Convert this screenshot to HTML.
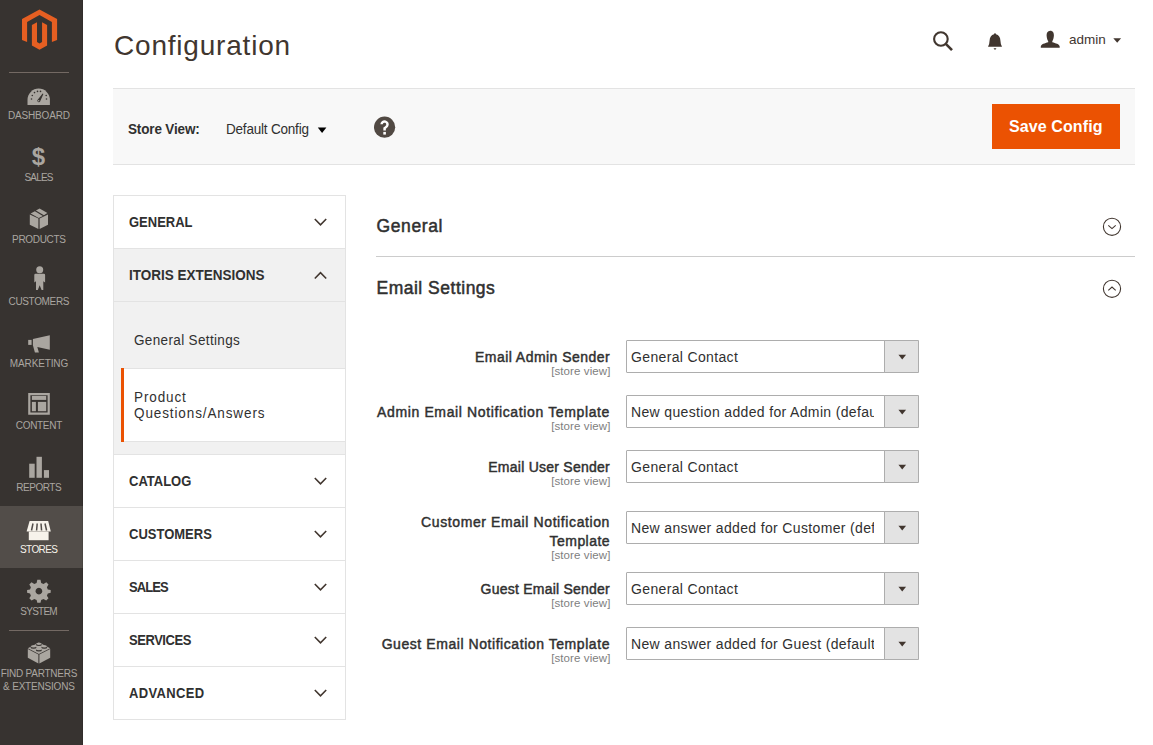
<!DOCTYPE html>
<html><head><meta charset="utf-8"><title>Configuration</title>
<style>html,body{margin:0;padding:0;background:#fff;width:1153px;height:745px;overflow:hidden;position:relative;font-family:"Liberation Sans",sans-serif}</style>
</head><body>
<div style="position:absolute;left:0px;top:0px;width:83px;height:745px;background:#373330"></div><div style="position:absolute;left:0px;top:506px;width:83px;height:62px;background:#524d49"></div><div style="position:absolute;left:82px;top:0px;width:1px;height:745px;background:rgba(0,0,0,0.1)"></div><svg style="position:absolute;left:0;top:0" width="83" height="60" viewBox="0 0 83 60">
<path fill="#e65f22" d="M39.5,9.4 L57.1,19.1 L57.1,39.9 L51.9,41.9 L51.9,22.1 L39.5,15.1 L27.1,22.1 L27.1,41.9 L22,39.9 L22,19.1 Z"/>
<path fill="#e65f22" d="M31.9,25.1 L37,22.3 L37,42.1 L39.5,43.6 L42.05,42.1 L42.05,22.3 L47.1,25.1 L47.1,45.6 L39.5,49.8 L31.9,45.6 Z"/>
</svg><div style="position:absolute;left:9px;top:72px;width:60px;height:1px;background:#736963"></div><div style="position:absolute;left:9px;top:630px;width:60px;height:1px;background:#736963"></div><svg style="position:absolute;left:0;top:0" width="83" height="745" viewBox="0 0 83 745">
<!-- dashboard -->
<path fill="#aaa6a0" d="M27.5,104.9 L27.5,99.8 A11.2,11.2 0 0 1 49.9,99.8 L49.9,104.9 Z"/>
<g fill="#373330"><circle cx="31.5" cy="99" r="0.8"/><circle cx="32.3" cy="95.5" r="0.8"/><circle cx="34.5" cy="92.6" r="0.8"/><circle cx="37.5" cy="91.4" r="0.8"/><circle cx="40.5" cy="91.4" r="0.8"/><circle cx="46.2" cy="95.5" r="0.8"/><circle cx="46.5" cy="99" r="0.8"/></g>
<path fill="#373330" d="M37.3,100.3 L42.6,93.6 L43.4,94.1 L40.1,101.6 A1.6,1.6 0 0 1 37.3,100.3 Z"/>
<circle cx="38.7" cy="100.8" r="0.7" fill="#aaa6a0"/>
<!-- products -->
<path fill="#aaa6a0" d="M29.8,214.5 L38.4,218.6 L38.4,229 L29.8,224.7 Z"/>
<path fill="#aaa6a0" d="M39.6,218.6 L48,214.5 L48,224.7 L39.6,229 Z"/>
<path fill="#aaa6a0" d="M30.6,213.5 L34.9,211.2 L42.9,215.9 L38.7,217.9 Z"/>
<path fill="#aaa6a0" d="M35.9,210.5 L39.6,208.6 L47.4,213.1 L43.9,215.2 Z"/>
<!-- customers -->
<circle cx="39.7" cy="269.7" r="3.5" fill="#aaa6a0"/>
<path fill="#aaa6a0" d="M34.3,275 Q34.3,273.8 35.5,273.8 L43.9,273.8 Q45.1,273.8 45.1,275 L45.1,282.6 L43.3,281.2 L43.3,289.9 L41.6,289.9 L39.7,285.2 L37.8,289.9 L36,289.9 L36,281.2 L34.3,282.6 Z"/>
<!-- marketing -->
<rect x="28.2" y="339.9" width="3.4" height="5" fill="#aaa6a0"/>
<path fill="#aaa6a0" d="M32.9,338.9 L49.8,335.2 L49.8,349.7 L37.3,346.9 L38.9,352.4 L34.9,352.6 L32.9,345.2 Z"/>
<!-- content -->
<path fill="#aaa6a0" fill-rule="evenodd" d="M28.2,393 H49.8 V414.8 H28.2 Z M30.4,395.2 V412.6 H47.6 V395.2 Z"/>
<rect x="31.9" y="395.9" width="14.3" height="4" fill="#aaa6a0"/>
<rect x="31.9" y="401.9" width="4" height="9.3" fill="#aaa6a0"/>
<rect x="37.9" y="401.9" width="8.3" height="9.3" fill="#aaa6a0"/>
<!-- reports -->
<rect x="29.2" y="463.7" width="5.5" height="14.1" fill="#aaa6a0"/>
<rect x="36.5" y="456.8" width="5.4" height="21" fill="#aaa6a0"/>
<rect x="43.9" y="470.1" width="5.1" height="7.7" fill="#aaa6a0"/>
<!-- stores -->
<path fill="#f7f3eb" d="M29.6,521 H48.2 L50.8,531.6 H26.6 Z"/>
<g stroke="#524d49" stroke-width="1.5"><line x1="33" y1="523.5" x2="31.5" y2="530.5"/><line x1="37.2" y1="523.5" x2="36.6" y2="530.5"/><line x1="41" y1="523.5" x2="41.6" y2="530.5"/><line x1="45" y1="523.5" x2="46.6" y2="530.5"/></g>
<rect x="28.8" y="531.6" width="19.8" height="8.6" fill="#f7f3eb"/>
<!-- system gear -->
<g transform="translate(38.9,591.1)" fill="#aaa6a0">
<path fill-rule="evenodd" d="M-1.6,-11.3 L1.6,-11.3 L2.3,-8.2 L4.6,-7.2 L7.4,-8.9 L9.6,-6.6 L8.0,-3.9 L8.9,-1.6 L11.8,-1 L11.8,1.6 L8.9,2.3 L8.0,4.6 L9.6,7.2 L7.3,9.5 L4.6,7.9 L2.3,8.9 L1.6,11.6 L-1.6,11.6 L-2.3,8.9 L-4.6,7.9 L-7.3,9.5 L-9.6,7.2 L-8.0,4.6 L-8.9,2.3 L-11.8,1.6 L-11.8,-1 L-8.9,-1.6 L-8.0,-3.9 L-9.6,-6.6 L-7.4,-8.9 L-4.6,-7.2 L-2.3,-8.2 Z M0,-3.4 A3.4,3.4 0 1 0 0.01,-3.4 Z"/>
</g>
<!-- lego --><g transform="translate(0,-0.8)">
<path fill="#aaa6a0" d="M27.8,649.1 L38.9,654.7 L50.2,649.1 L38.9,643.3 Z"/>
<path fill="#aaa6a0" d="M27.8,649.8 L38.4,655.2 L38.4,664.2 L27.8,658.5 Z"/>
<path fill="#aaa6a0" d="M39.4,655.2 L50.2,649.8 L50.2,658.5 L39.4,664.2 Z"/>
<g fill="#373330"><ellipse cx="38.9" cy="645.6" rx="3" ry="1.3"/><ellipse cx="33.5" cy="648.2" rx="3" ry="1.3"/><ellipse cx="44.3" cy="648.2" rx="3" ry="1.3"/><ellipse cx="38.9" cy="651" rx="3" ry="1.3"/></g>
<g fill="#aaa6a0"><ellipse cx="38.9" cy="644.6" rx="2.6" ry="1.1"/><ellipse cx="33.5" cy="647.2" rx="2.6" ry="1.1"/><ellipse cx="44.3" cy="647.2" rx="2.6" ry="1.1"/><ellipse cx="38.9" cy="650" rx="2.6" ry="1.1"/></g>
</g></svg><svg style="position:absolute;left:900px;top:20px" width="253" height="40" viewBox="900 20 253 40">
<circle cx="940.9" cy="39" r="6.8" fill="none" stroke="#41362f" stroke-width="2.1"/>
<line x1="945.8" y1="43.9" x2="952" y2="50.1" stroke="#41362f" stroke-width="2.6"/>
<path fill="#41362f" d="M995,33.2 Q996,33.2 996,34.3 Q1000.2,35.5 1000.4,40.5 Q1000.6,45 1002,46.7 H988 Q989.4,45 989.6,40.5 Q989.8,35.5 994,34.3 Q994,33.2 995,33.2 Z"/>
<path fill="#41362f" d="M993.5,48.2 H996.5 L995,50 Z"/>
<path fill="#41362f" d="M1050.2,30.8 C1047.5,30.8 1046.5,33 1046.6,35.5 C1046.7,38 1047.5,40.3 1048.2,41.2 L1048.2,42.2 C1045,43.2 1041,44 1040.8,46.5 L1040.8,47.7 L1059.7,47.7 L1059.7,46.5 C1059.5,44 1055.5,43.2 1052.3,42.2 L1052.3,41.2 C1053,40.3 1053.8,38 1053.9,35.5 C1054,33 1053,30.8 1050.2,30.8 Z"/>
<path fill="#41362f" d="M1113.3,38.2 H1121.1 L1117.2,42.7 Z"/>
</svg><div style="position:absolute;left:113px;top:88px;width:1022px;height:77px;background:#f8f8f8;border-top:1px solid #e3e3e3;border-bottom:1px solid #e3e3e3;box-sizing:border-box"></div><svg style="position:absolute;left:310px;top:110px" width="90" height="35" viewBox="310 110 90 35">
<path fill="#000" d="M317.8,127.6 H326.4 L322.1,133.1 Z"/>
<circle cx="384.6" cy="127.2" r="10.6" fill="#514943"/>
<path d="M381.6,124.3 A2.95,2.95 0 1 1 387.1,125.9 Q386.4,127 384.6,128.2 L384.6,130.6" fill="none" stroke="#fff" stroke-width="2.5"/>
<rect x="383.3" y="131.9" width="2.6" height="2.7" fill="#fff"/>
</svg><div style="position:absolute;left:992px;top:104px;width:128px;height:45px;background:#eb5202"></div><div style="position:absolute;left:113px;top:195px;width:233px;height:525px;background:#fff;border:1px solid #e3e3e3;box-sizing:border-box"></div><div style="position:absolute;left:114px;top:248px;width:231px;height:1px;background:#e3e3e3"></div><div style="position:absolute;left:114px;top:249px;width:231px;height:206px;background:#f1f1f1"></div><div style="position:absolute;left:114px;top:301px;width:231px;height:1px;background:#e3e3e3"></div><div style="position:absolute;left:121px;top:368px;width:224px;height:74px;background:#fff;border-top:1px solid #e3e3e3;border-bottom:1px solid #e3e3e3;box-sizing:border-box"></div><div style="position:absolute;left:121px;top:368px;width:3px;height:74px;background:#eb5202"></div><div style="position:absolute;left:114px;top:454px;width:231px;height:1px;background:#e3e3e3"></div><div style="position:absolute;left:114px;top:507px;width:231px;height:1px;background:#e3e3e3"></div><div style="position:absolute;left:114px;top:560px;width:231px;height:1px;background:#e3e3e3"></div><div style="position:absolute;left:114px;top:613px;width:231px;height:1px;background:#e3e3e3"></div><div style="position:absolute;left:114px;top:666px;width:231px;height:1px;background:#e3e3e3"></div><svg style="position:absolute;left:300px;top:190px" width="40" height="520" viewBox="300 190 40 520"><path d="M314.8,219 L320.5,224.8 L326.2,219" fill="none" stroke="#41362f" stroke-width="1.6"/><path d="M314.8,278.5 L320.5,272.7 L326.2,278.5" fill="none" stroke="#41362f" stroke-width="1.6"/><path d="M314.8,478 L320.5,483.8 L326.2,478" fill="none" stroke="#41362f" stroke-width="1.6"/><path d="M314.8,531 L320.5,536.8 L326.2,531" fill="none" stroke="#41362f" stroke-width="1.6"/><path d="M314.8,584 L320.5,589.8 L326.2,584" fill="none" stroke="#41362f" stroke-width="1.6"/><path d="M314.8,637 L320.5,642.8 L326.2,637" fill="none" stroke="#41362f" stroke-width="1.6"/><path d="M314.8,690 L320.5,695.8 L326.2,690" fill="none" stroke="#41362f" stroke-width="1.6"/></svg><div style="position:absolute;left:376px;top:256px;width:759px;height:1px;background:#cccccc"></div><svg style="position:absolute;left:1095px;top:210px" width="35" height="95" viewBox="1095 210 35 95">
<circle cx="1112" cy="226.8" r="8.6" fill="none" stroke="#41362f" stroke-width="1.1"/>
<path d="M1108.3,225.3 L1112,228.6 L1115.7,225.3" fill="none" stroke="#41362f" stroke-width="1.1"/>
<circle cx="1112" cy="288.8" r="8.6" fill="none" stroke="#41362f" stroke-width="1.1"/>
<path d="M1108.3,290.3 L1112,287 L1115.7,290.3" fill="none" stroke="#41362f" stroke-width="1.1"/>
</svg><div style="position:absolute;left:626px;top:340px;width:293px;height:33px;background:#fff;border:1px solid #adadad;border-radius:1px;box-sizing:border-box"></div><div style="position:absolute;left:884px;top:340px;width:35px;height:33px;background:#e3e3e3;border:1px solid #adadad;border-radius:0 1px 1px 0;box-sizing:border-box"></div><svg style="position:absolute;left:895px;top:350px" width="14" height="12" viewBox="0 0 14 12"><path d="M3.4,4.7 H11.1 L7.25,9.6 Z" fill="#41362f"/></svg><div style="position:absolute;left:631px;top:341px;width:243px;height:31px;overflow:hidden"><div style="position:absolute;left:0;top:8.90px;white-space:nowrap;font-family:'Liberation Sans',sans-serif;font-size:14px;line-height:14px;color:#303030;letter-spacing:0.35px">General Contact</div></div><div style="position:absolute;left:626px;top:395px;width:293px;height:33px;background:#fff;border:1px solid #adadad;border-radius:1px;box-sizing:border-box"></div><div style="position:absolute;left:884px;top:395px;width:35px;height:33px;background:#e3e3e3;border:1px solid #adadad;border-radius:0 1px 1px 0;box-sizing:border-box"></div><svg style="position:absolute;left:895px;top:405px" width="14" height="12" viewBox="0 0 14 12"><path d="M3.4,4.7 H11.1 L7.25,9.6 Z" fill="#41362f"/></svg><div style="position:absolute;left:631px;top:396px;width:243px;height:31px;overflow:hidden"><div style="position:absolute;left:0;top:8.90px;white-space:nowrap;font-family:'Liberation Sans',sans-serif;font-size:14px;line-height:14px;color:#303030;letter-spacing:0.35px">New question added for Admin (default)</div></div><div style="position:absolute;left:626px;top:450px;width:293px;height:33px;background:#fff;border:1px solid #adadad;border-radius:1px;box-sizing:border-box"></div><div style="position:absolute;left:884px;top:450px;width:35px;height:33px;background:#e3e3e3;border:1px solid #adadad;border-radius:0 1px 1px 0;box-sizing:border-box"></div><svg style="position:absolute;left:895px;top:460px" width="14" height="12" viewBox="0 0 14 12"><path d="M3.4,4.7 H11.1 L7.25,9.6 Z" fill="#41362f"/></svg><div style="position:absolute;left:631px;top:451px;width:243px;height:31px;overflow:hidden"><div style="position:absolute;left:0;top:8.90px;white-space:nowrap;font-family:'Liberation Sans',sans-serif;font-size:14px;line-height:14px;color:#303030;letter-spacing:0.35px">General Contact</div></div><div style="position:absolute;left:626px;top:511px;width:293px;height:33px;background:#fff;border:1px solid #adadad;border-radius:1px;box-sizing:border-box"></div><div style="position:absolute;left:884px;top:511px;width:35px;height:33px;background:#e3e3e3;border:1px solid #adadad;border-radius:0 1px 1px 0;box-sizing:border-box"></div><svg style="position:absolute;left:895px;top:521px" width="14" height="12" viewBox="0 0 14 12"><path d="M3.4,4.7 H11.1 L7.25,9.6 Z" fill="#41362f"/></svg><div style="position:absolute;left:631px;top:512px;width:243px;height:31px;overflow:hidden"><div style="position:absolute;left:0;top:8.90px;white-space:nowrap;font-family:'Liberation Sans',sans-serif;font-size:14px;line-height:14px;color:#303030;letter-spacing:0.35px">New answer added for Customer (default)</div></div><div style="position:absolute;left:626px;top:572px;width:293px;height:33px;background:#fff;border:1px solid #adadad;border-radius:1px;box-sizing:border-box"></div><div style="position:absolute;left:884px;top:572px;width:35px;height:33px;background:#e3e3e3;border:1px solid #adadad;border-radius:0 1px 1px 0;box-sizing:border-box"></div><svg style="position:absolute;left:895px;top:582px" width="14" height="12" viewBox="0 0 14 12"><path d="M3.4,4.7 H11.1 L7.25,9.6 Z" fill="#41362f"/></svg><div style="position:absolute;left:631px;top:573px;width:243px;height:31px;overflow:hidden"><div style="position:absolute;left:0;top:8.90px;white-space:nowrap;font-family:'Liberation Sans',sans-serif;font-size:14px;line-height:14px;color:#303030;letter-spacing:0.35px">General Contact</div></div><div style="position:absolute;left:626px;top:627px;width:293px;height:33px;background:#fff;border:1px solid #adadad;border-radius:1px;box-sizing:border-box"></div><div style="position:absolute;left:884px;top:627px;width:35px;height:33px;background:#e3e3e3;border:1px solid #adadad;border-radius:0 1px 1px 0;box-sizing:border-box"></div><svg style="position:absolute;left:895px;top:637px" width="14" height="12" viewBox="0 0 14 12"><path d="M3.4,4.7 H11.1 L7.25,9.6 Z" fill="#41362f"/></svg><div style="position:absolute;left:631px;top:628px;width:243px;height:31px;overflow:hidden"><div style="position:absolute;left:0;top:8.90px;white-space:nowrap;font-family:'Liberation Sans',sans-serif;font-size:14px;line-height:14px;color:#303030;letter-spacing:0.35px">New answer added for Guest (default)</div></div>
<div style="position:absolute;top:110.70px;white-space:nowrap;font-family:'Liberation Sans',sans-serif;font-size:10px;line-height:10px;font-weight:400;color:#aaa6a0;letter-spacing:-0.18px;;left:-61.09px;width:200px;text-align:center">DASHBOARD</div><div style="position:absolute;top:172.70px;white-space:nowrap;font-family:'Liberation Sans',sans-serif;font-size:10px;line-height:10px;font-weight:400;color:#aaa6a0;letter-spacing:-0.8px;;left:-61.4px;width:200px;text-align:center">SALES</div><div style="position:absolute;top:234.70px;white-space:nowrap;font-family:'Liberation Sans',sans-serif;font-size:10px;line-height:10px;font-weight:400;color:#aaa6a0;letter-spacing:-0.33px;;left:-61.165px;width:200px;text-align:center">PRODUCTS</div><div style="position:absolute;top:296.70px;white-space:nowrap;font-family:'Liberation Sans',sans-serif;font-size:10px;line-height:10px;font-weight:400;color:#aaa6a0;letter-spacing:-0.36px;;left:-61.18px;width:200px;text-align:center">CUSTOMERS</div><div style="position:absolute;top:358.70px;white-space:nowrap;font-family:'Liberation Sans',sans-serif;font-size:10px;line-height:10px;font-weight:400;color:#aaa6a0;letter-spacing:-0.14px;;left:-61.07px;width:200px;text-align:center">MARKETING</div><div style="position:absolute;top:420.70px;white-space:nowrap;font-family:'Liberation Sans',sans-serif;font-size:10px;line-height:10px;font-weight:400;color:#aaa6a0;letter-spacing:-0.3px;;left:-61.15px;width:200px;text-align:center">CONTENT</div><div style="position:absolute;top:482.70px;white-space:nowrap;font-family:'Liberation Sans',sans-serif;font-size:10px;line-height:10px;font-weight:400;color:#aaa6a0;letter-spacing:-0.47px;;left:-61.235px;width:200px;text-align:center">REPORTS</div><div style="position:absolute;top:544.70px;white-space:nowrap;font-family:'Liberation Sans',sans-serif;font-size:10px;line-height:10px;font-weight:400;color:#f7f3eb;letter-spacing:-0.6px;;left:-61.3px;width:200px;text-align:center">STORES</div><div style="position:absolute;top:606.70px;white-space:nowrap;font-family:'Liberation Sans',sans-serif;font-size:10px;line-height:10px;font-weight:400;color:#aaa6a0;letter-spacing:-0.76px;;left:-61.38px;width:200px;text-align:center">SYSTEM</div><div style="position:absolute;top:668.70px;white-space:nowrap;font-family:'Liberation Sans',sans-serif;font-size:10px;line-height:10px;font-weight:400;color:#aaa6a0;letter-spacing:-0.24px;;left:-61.12px;width:200px;text-align:center">FIND PARTNERS</div><div style="position:absolute;top:682.00px;white-space:nowrap;font-family:'Liberation Sans',sans-serif;font-size:10px;line-height:10px;font-weight:400;color:#aaa6a0;letter-spacing:-0.19px;;left:-61.1px;width:200px;text-align:center">&amp; EXTENSIONS</div><div style="position:absolute;top:144.50px;white-space:nowrap;font-family:'Liberation Sans',sans-serif;font-size:24px;line-height:24px;font-weight:700;color:#aaa6a0;letter-spacing:0px;;left:-61.6px;width:200px;text-align:center">$</div><div style="position:absolute;top:31.50px;white-space:nowrap;font-family:'Liberation Sans',sans-serif;font-size:28px;line-height:28px;font-weight:400;color:#41362f;letter-spacing:0.8px;;left:114px">Configuration</div><div style="position:absolute;top:32.80px;white-space:nowrap;font-family:'Liberation Sans',sans-serif;font-size:13.5px;line-height:13.5px;font-weight:400;color:#41362f;letter-spacing:0px;;left:1069px">admin</div><div style="position:absolute;top:123.30px;white-space:nowrap;font-family:'Liberation Sans',sans-serif;font-size:13.5px;line-height:13.5px;font-weight:700;color:#303030;letter-spacing:-0.15px;transform:scaleY(1.08);transform-origin:0 11px;left:128px">Store View:</div><div style="position:absolute;top:123.30px;white-space:nowrap;font-family:'Liberation Sans',sans-serif;font-size:13.5px;line-height:13.5px;font-weight:400;color:#303030;letter-spacing:-0.2px;transform:scaleY(1.08);transform-origin:0 11px;left:226px">Default Config</div><div style="position:absolute;top:119.20px;white-space:nowrap;font-family:'Liberation Sans',sans-serif;font-size:16px;line-height:16px;font-weight:700;color:#ffffff;letter-spacing:0.1px;;left:1009px">Save Config</div><div style="position:absolute;top:215.70px;white-space:nowrap;font-family:'Liberation Sans',sans-serif;font-size:13px;line-height:13px;font-weight:700;color:#303030;letter-spacing:0px;transform:scaleY(1.1);transform-origin:0 11px;left:129px">GENERAL</div><div style="position:absolute;top:268.70px;white-space:nowrap;font-family:'Liberation Sans',sans-serif;font-size:13.5px;line-height:13.5px;font-weight:700;color:#303030;letter-spacing:0px;transform:scaleY(1.1);transform-origin:0 11px;left:129px">ITORIS EXTENSIONS</div><div style="position:absolute;top:333.80px;white-space:nowrap;font-family:'Liberation Sans',sans-serif;font-size:13.5px;line-height:13.5px;font-weight:400;color:#303030;letter-spacing:0.35px;transform:scaleY(1.08);transform-origin:0 11px;left:134px">General Settings</div><div style="position:absolute;top:391.00px;white-space:nowrap;font-family:'Liberation Sans',sans-serif;font-size:13.5px;line-height:13.5px;font-weight:400;color:#303030;letter-spacing:0.88px;transform:scaleY(1.08);transform-origin:0 11px;left:134px">Product</div><div style="position:absolute;top:407.00px;white-space:nowrap;font-family:'Liberation Sans',sans-serif;font-size:13.5px;line-height:13.5px;font-weight:400;color:#303030;letter-spacing:0.89px;transform:scaleY(1.08);transform-origin:0 11px;left:134px">Questions/Answers</div><div style="position:absolute;top:475.30px;white-space:nowrap;font-family:'Liberation Sans',sans-serif;font-size:13px;line-height:13px;font-weight:700;color:#303030;letter-spacing:0px;transform:scaleY(1.1);transform-origin:0 11px;left:129px">CATALOG</div><div style="position:absolute;top:528.30px;white-space:nowrap;font-family:'Liberation Sans',sans-serif;font-size:13px;line-height:13px;font-weight:700;color:#303030;letter-spacing:0px;transform:scaleY(1.1);transform-origin:0 11px;left:129px">CUSTOMERS</div><div style="position:absolute;top:581.30px;white-space:nowrap;font-family:'Liberation Sans',sans-serif;font-size:13px;line-height:13px;font-weight:700;color:#303030;letter-spacing:-0.9px;transform:scaleY(1.1);transform-origin:0 11px;left:129px">SALES</div><div style="position:absolute;top:634.30px;white-space:nowrap;font-family:'Liberation Sans',sans-serif;font-size:13px;line-height:13px;font-weight:700;color:#303030;letter-spacing:-0.45px;transform:scaleY(1.1);transform-origin:0 11px;left:129px">SERVICES</div><div style="position:absolute;top:687.30px;white-space:nowrap;font-family:'Liberation Sans',sans-serif;font-size:13px;line-height:13px;font-weight:700;color:#303030;letter-spacing:0.35px;transform:scaleY(1.1);transform-origin:0 11px;left:129px">ADVANCED</div><div style="position:absolute;top:217.80px;white-space:nowrap;font-family:'Liberation Sans',sans-serif;font-size:17.5px;line-height:17.5px;font-weight:400;color:#303030;letter-spacing:0.6px;-webkit-text-stroke:0.5px #303030;left:376.5px">General</div><div style="position:absolute;top:279.60px;white-space:nowrap;font-family:'Liberation Sans',sans-serif;font-size:17.5px;line-height:17.5px;font-weight:400;color:#303030;letter-spacing:0.5px;-webkit-text-stroke:0.5px #303030;left:376.5px">Email Settings</div><div style="position:absolute;top:349.90px;white-space:nowrap;font-family:'Liberation Sans',sans-serif;font-size:14px;line-height:14px;font-weight:400;color:#303030;letter-spacing:0.45px;-webkit-text-stroke:0.45px #303030;right:543px;text-align:right">Email Admin Sender</div><div style="position:absolute;top:366.40px;white-space:nowrap;font-family:'Liberation Sans',sans-serif;font-size:11.5px;line-height:11.5px;font-weight:400;color:#808080;letter-spacing:0.1px;;right:542.5px;text-align:right">[store view]</div><div style="position:absolute;top:404.90px;white-space:nowrap;font-family:'Liberation Sans',sans-serif;font-size:14px;line-height:14px;font-weight:400;color:#303030;letter-spacing:0.63px;-webkit-text-stroke:0.45px #303030;right:543px;text-align:right">Admin Email Notification Template</div><div style="position:absolute;top:421.40px;white-space:nowrap;font-family:'Liberation Sans',sans-serif;font-size:11.5px;line-height:11.5px;font-weight:400;color:#808080;letter-spacing:0.1px;;right:542.5px;text-align:right">[store view]</div><div style="position:absolute;top:459.90px;white-space:nowrap;font-family:'Liberation Sans',sans-serif;font-size:14px;line-height:14px;font-weight:400;color:#303030;letter-spacing:0.25px;-webkit-text-stroke:0.45px #303030;right:543px;text-align:right">Email User Sender</div><div style="position:absolute;top:476.40px;white-space:nowrap;font-family:'Liberation Sans',sans-serif;font-size:11.5px;line-height:11.5px;font-weight:400;color:#808080;letter-spacing:0.1px;;right:542.5px;text-align:right">[store view]</div><div style="position:absolute;top:514.90px;white-space:nowrap;font-family:'Liberation Sans',sans-serif;font-size:14px;line-height:14px;font-weight:400;color:#303030;letter-spacing:0.6px;-webkit-text-stroke:0.45px #303030;right:543px;text-align:right">Customer Email Notification</div><div style="position:absolute;top:533.60px;white-space:nowrap;font-family:'Liberation Sans',sans-serif;font-size:14px;line-height:14px;font-weight:400;color:#303030;letter-spacing:0.45px;-webkit-text-stroke:0.45px #303030;right:543px;text-align:right">Template</div><div style="position:absolute;top:550.10px;white-space:nowrap;font-family:'Liberation Sans',sans-serif;font-size:11.5px;line-height:11.5px;font-weight:400;color:#808080;letter-spacing:0.1px;;right:542.5px;text-align:right">[store view]</div><div style="position:absolute;top:581.90px;white-space:nowrap;font-family:'Liberation Sans',sans-serif;font-size:14px;line-height:14px;font-weight:400;color:#303030;letter-spacing:0.23px;-webkit-text-stroke:0.45px #303030;right:543px;text-align:right">Guest Email Sender</div><div style="position:absolute;top:598.40px;white-space:nowrap;font-family:'Liberation Sans',sans-serif;font-size:11.5px;line-height:11.5px;font-weight:400;color:#808080;letter-spacing:0.1px;;right:542.5px;text-align:right">[store view]</div><div style="position:absolute;top:636.90px;white-space:nowrap;font-family:'Liberation Sans',sans-serif;font-size:14px;line-height:14px;font-weight:400;color:#303030;letter-spacing:0.56px;-webkit-text-stroke:0.45px #303030;right:543px;text-align:right">Guest Email Notification Template</div><div style="position:absolute;top:653.40px;white-space:nowrap;font-family:'Liberation Sans',sans-serif;font-size:11.5px;line-height:11.5px;font-weight:400;color:#808080;letter-spacing:0.1px;;right:542.5px;text-align:right">[store view]</div>
</body></html>
